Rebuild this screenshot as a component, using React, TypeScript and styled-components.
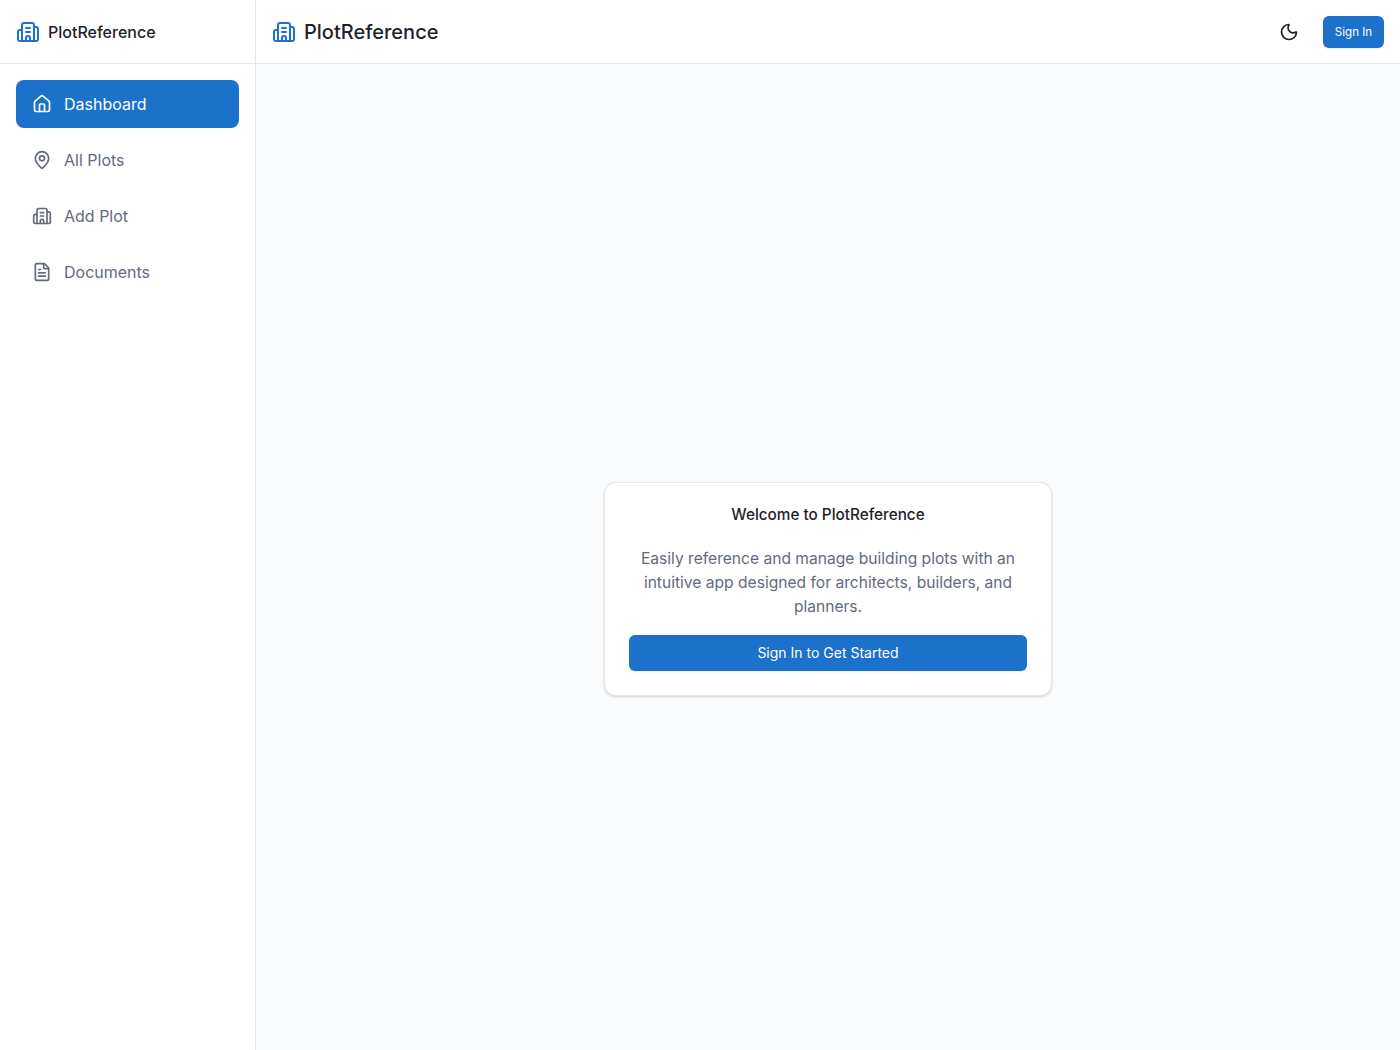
import React from 'react';
import styled, {createGlobalStyle} from 'styled-components';
import {Building2, FileText, House, MapPin, Moon} from 'lucide-react';

const primary = '#1c72ca';

const GlobalStyle = createGlobalStyle`
  html, body, #root {
    height: 100%;
    margin: 0;
  }
  body {
    font-family: Inter, "Noto Sans", "Liberation Sans", sans-serif;
    background: #f9fbfd;
    color: #1f2329;
  }
  * {
    box-sizing: border-box;
  }
`;

const navItems = [
  {label: 'Dashboard', Icon: House, active: true},
  {label: 'All Plots', Icon: MapPin, active: false},
  {label: 'Add Plot', Icon: Building2, active: false},
  {label: 'Documents', Icon: FileText, active: false},
];

const App = () => (
  <Layout>
    <GlobalStyle />
    <Sidebar>
      <SidebarBrand>
        <Building2 size={24} color={primary} />
        <SidebarTitle>PlotReference</SidebarTitle>
      </SidebarBrand>
      <Nav>
        {navItems.map(({label, Icon, active}) => (
          <NavItem key={label} $active={active}>
            <Icon size={20} />
            <span>{label}</span>
          </NavItem>
        ))}
      </Nav>
    </Sidebar>
    <Main>
      <Header>
        <HeaderBrand>
          <Building2 size={24} color={primary} />
          <HeaderTitle>PlotReference</HeaderTitle>
        </HeaderBrand>
        <HeaderActions>
          <ThemeToggle aria-label="Toggle theme">
            <Moon size={20} />
          </ThemeToggle>
          <SmallButton>Sign In</SmallButton>
        </HeaderActions>
      </Header>
      <Content>
        <Card>
          <CardTitle>Welcome to PlotReference</CardTitle>
          <CardText>
            Easily reference and manage building plots with an intuitive app designed for architects, builders, and
            planners.
          </CardText>
          <WideButton>Sign In to Get Started</WideButton>
        </Card>
      </Content>
    </Main>
  </Layout>
);

const Layout = styled.div`
  display: flex;
  height: 1050px;
  overflow: hidden;
`;

const Sidebar = styled.aside`
  width: 256px;
  flex-shrink: 0;
  background: #ffffff;
  border-right: 1px solid #e3e6ea;
`;

const SidebarBrand = styled.div`
  height: 64px;
  padding: 0 16px;
  display: flex;
  align-items: center;
  gap: 8px;
  border-bottom: 1px solid #e3e6ea;
`;

const SidebarTitle = styled.span`
  font-size: 16px;
  font-weight: 500;
  line-height: 24px;
`;

const Nav = styled.nav`
  padding: 16px;
  display: flex;
  flex-direction: column;
  gap: 8px;
`;

const NavItem = styled.a<{$active: boolean}>`
  height: 48px;
  padding: 0 16px;
  display: flex;
  align-items: center;
  gap: 12px;
  border-radius: 8px;
  font-size: 16px;
  font-weight: 400;
  line-height: 24px;
  color: ${p => (p.$active ? '#ffffff' : '#646a7d')};
  background: ${p => (p.$active ? primary : 'transparent')};
  svg {
    flex-shrink: 0;
  }
`;

const Main = styled.div`
  flex: 1;
  min-width: 0;
  display: flex;
  flex-direction: column;
`;

const Header = styled.header`
  height: 64px;
  flex-shrink: 0;
  padding: 0 16px;
  display: flex;
  align-items: center;
  justify-content: space-between;
  background: #ffffff;
  border-bottom: 1px solid #e3e6ea;
`;

const HeaderBrand = styled.div`
  display: flex;
  align-items: center;
  gap: 8px;
`;

const HeaderTitle = styled.span`
  font-size: 20px;
  font-weight: 500;
  line-height: 28px;
`;

const HeaderActions = styled.div`
  display: flex;
  align-items: center;
  gap: 16px;
`;

const ThemeToggle = styled.button`
  width: 36px;
  height: 36px;
  padding: 0;
  display: flex;
  align-items: center;
  justify-content: center;
  border: 0;
  background: transparent;
  color: #1f2329;
`;

const SmallButton = styled.button`
  width: 61px;
  height: 32px;
  padding: 0;
  border: 0;
  border-radius: 6px;
  background: ${primary};
  color: #ffffff;
  font-family: inherit;
  font-size: 11.6px;
  font-weight: 400;
  box-shadow: 0 1px 2px rgba(0, 0, 0, 0.08);
`;

const Content = styled.main`
  flex: 1;
  padding-top: 64px;
  display: flex;
  align-items: center;
  justify-content: center;
  background: #f9fbfd;
`;

const Card = styled.section`
  width: 448px;
  padding: 20px 24px 24px;
  background: #ffffff;
  border: 1px solid #e3e6ea;
  border-radius: 12px;
  box-shadow: 0 1px 3px rgba(0, 0, 0, 0.1), 0 1px 2px rgba(0, 0, 0, 0.06);
  text-align: center;
`;

const CardTitle = styled.h2`
  margin: 0 0 20px;
  font-size: 15.3px;
  font-weight: 500;
  line-height: 24px;
`;

const CardText = styled.p`
  margin: 0 0 16px;
  font-size: 15.6px;
  font-weight: 400;
  line-height: 24px;
  color: #646a7d;
`;

const WideButton = styled.button`
  width: 100%;
  height: 36px;
  padding: 0 0 1px;
  border: 0;
  border-radius: 6px;
  background: ${primary};
  color: #ffffff;
  font-family: inherit;
  font-size: 14px;
  font-weight: 400;
  box-shadow: 0 1px 2px rgba(0, 0, 0, 0.08);
`;

export default App;
